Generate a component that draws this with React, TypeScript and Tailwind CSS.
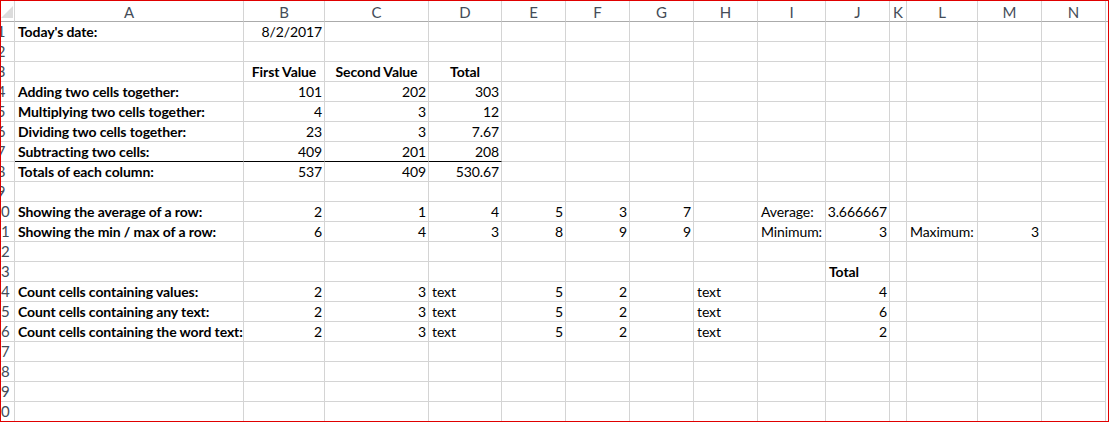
import React from "react";

type Cell = { t: string; b?: boolean; a?: "l" | "r" | "c" };

const COLS = ["A", "B", "C", "D", "E", "F", "G", "H", "I", "J", "K", "L", "M", "N"];

const L = (t: string): Cell => ({ t, b: true, a: "l" });
const N = (t: string): Cell => ({ t, a: "r" });
const T = (t: string): Cell => ({ t, a: "l" });
const H = (t: string): Cell => ({ t, b: true, a: "c" });

const rows: Record<number, Record<string, Cell>> = {
  1: { A: L("Today's date:"), B: N("8/2/2017") },
  3: { B: H("First Value"), C: H("Second Value"), D: H("Total") },
  4: { A: L("Adding two cells together:"), B: N("101"), C: N("202"), D: N("303") },
  5: { A: L("Multiplying two cells together:"), B: N("4"), C: N("3"), D: N("12") },
  6: { A: L("Dividing two cells together:"), B: N("23"), C: N("3"), D: N("7.67") },
  7: { A: L("Subtracting two cells:"), B: N("409"), C: N("201"), D: N("208") },
  8: { A: L("Totals of each column:"), B: N("537"), C: N("409"), D: N("530.67") },
  10: {
    A: L("Showing the average of a row:"),
    B: N("2"), C: N("1"), D: N("4"), E: N("5"), F: N("3"), G: N("7"),
    I: T("Average:"), J: N("3.666667"),
  },
  11: {
    A: L("Showing the min / max of a row:"),
    B: N("6"), C: N("4"), D: N("3"), E: N("8"), F: N("9"), G: N("9"),
    I: T("Minimum:"), J: N("3"), L: T("Maximum:"), M: N("3"),
  },
  13: { J: { t: "Total", b: true, a: "l" } },
  14: {
    A: L("Count cells containing values:"),
    B: N("2"), C: N("3"), D: T("text"), E: N("5"), F: N("2"), H: T("text"), J: N("4"),
  },
  15: {
    A: L("Count cells containing any text:"),
    B: N("2"), C: N("3"), D: T("text"), E: N("5"), F: N("2"), H: T("text"), J: N("6"),
  },
  16: {
    A: L("Count cells containing the word text:"),
    B: N("2"), C: N("3"), D: T("text"), E: N("5"), F: N("2"), H: T("text"), J: N("2"),
  },
};

const border7 = new Set(["A", "B", "C", "D"]);

export default function App() {
  const cells: React.ReactNode[] = [];

  cells.push(
    <div key="corner" className="relative border-r border-b border-r-[#d4d4d4] border-b-[#ababab] bg-white">
      <svg width="14" height="21" className="block">
        <polygon points="0,17 12,17 12,5" fill="#dcdcdc" />
      </svg>
    </div>
  );
  COLS.forEach((c) => {
    cells.push(
      <div
        key={"h" + c}
        className="flex items-center justify-center border-r border-b border-r-[#d4d4d4] border-b-[#ababab] bg-white text-[15px] text-[#444c58] leading-none pt-[2px]"
      >
        {c}
      </div>
    );
  });
  cells.push(<div key="hfill" className="border-b border-b-[#ababab]" />);

  for (let r = 1; r <= 20; r++) {
    cells.push(
      <div key={"rh" + r} className="overflow-hidden border-r border-b border-[#d4d4d4]">
        <div className="ml-[-15px] flex w-[30px] justify-center text-[15px] leading-[19px] text-[#444c58]">
          {r}
        </div>
      </div>
    );
    COLS.forEach((c) => {
      const cell = rows[r]?.[c];
      const blackBottom = r === 7 && border7.has(c);
      const align =
        cell?.a === "r" ? "justify-end pr-[2px]" : cell?.a === "c" ? "justify-center" : "justify-start pl-[3px]";
      cells.push(
        <div
          key={r + c}
          className={
            "flex items-end whitespace-nowrap border-r border-b text-[14px] leading-[19px] tracking-[-0.1px] text-black " +
            (blackBottom ? "border-r-[#d4d4d4] border-b-black " : "border-[#d4d4d4] ") +
            align +
            (cell?.b ? " font-bold" : "")
          }
        >
          {cell?.t ?? ""}
        </div>
      );
    });
    cells.push(<div key={"f" + r} />);
  }

  return (
    <div className="h-[422px] w-[1110px] bg-white">
      <div
        className="h-[422px] w-[1109px] overflow-hidden border border-[#e00000] bg-white"
        style={{ fontFamily: "Lato, 'Open Sans', sans-serif" }}
      >
        <div className="grid grid-cols-[14px_229px_81px_104px_73px_64px_64px_64px_64px_68px_64px_17px_71px_64px_64px_2px] grid-rows-[21px_repeat(20,20px)]">
          {cells}
        </div>
      </div>
    </div>
  );
}
